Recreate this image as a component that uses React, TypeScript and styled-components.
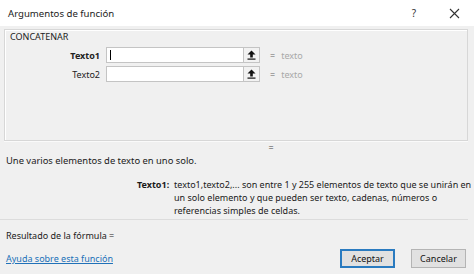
import React from "react";
import styled, { createGlobalStyle } from "styled-components";

const Global = createGlobalStyle`
  html, body { margin: 0; padding: 0; background: #f0f0f0; }
  body { font-family: "Noto Sans", "Open Sans", sans-serif; }
`;

const Dialog = styled.div`
  width: 474px;
  height: 274px;
  background: #f0f0f0;
  display: flex;
  flex-direction: column;
  overflow: hidden;
  color: #1a1a1a;
  font-size: 9px;
  & > * {
    flex-shrink: 0;
  }
`;

const TitleBar = styled.div`
  height: 26px;
  background: #fff;
  display: flex;
  align-items: center;
  padding-left: 8px;
  font-size: 9.6px;
  color: #222;
`;

const Title = styled.div`
  flex: 1;
`;

const TitleButton = styled.div`
  width: 40px;
  height: 26px;
  display: flex;
  align-items: center;
  justify-content: center;
  font-size: 10px;
  color: #333;
`;

const GroupBox = styled.div`
  margin: 3px 6px 0 4px;
  height: 112px;
  border: 1px solid #d7d7d7;
  box-shadow: inset 1px 1px 0 #fff, 0 1px 0 #fafafa;
  box-sizing: border-box;
  padding-top: 1px;
`;

const Legend = styled.div`
  padding-left: 5px;
  line-height: 12px;
  color: #222;
`;

const ArgList = styled.div`
  display: flex;
  flex-direction: column;
  gap: 3px;
  margin-top: 4px;
`;

const ArgRow = styled.div`
  display: grid;
  grid-template-columns: 95px 154px auto auto;
  justify-content: start;
  align-items: center;
  column-gap: 6px;
  height: 16px;
`;

const ArgLabel = styled.div<{ $bold?: boolean }>`
  text-align: right;
  font-weight: ${(p) => (p.$bold ? 700 : 400)};
  color: #222;
`;

const InputBox = styled.div`
  height: 16px;
  box-sizing: border-box;
  border: 1px solid #c4c4c4;
  background: #fff;
  display: flex;
  align-items: stretch;
`;

const InputField = styled.div`
  flex: 1;
  position: relative;
`;

const Caret = styled.span`
  position: absolute;
  left: 3px;
  top: 2px;
  width: 1px;
  height: 10px;
  background: #000;
`;

const CollapseButton = styled.div`
  width: 15px;
  border-left: 1px solid #c4c4c4;
  background: #f2f2f2;
  display: flex;
  align-items: center;
  justify-content: center;
`;

const Equals = styled.div`
  margin-left: 4px;
  color: #666;
`;

const Value = styled.div`
  color: #a8a8a8;
`;

const ResultEq = styled.div`
  width: 474px;
  text-align: center;
  padding-left: 68px;
  box-sizing: border-box;
  line-height: 12px;
  margin-top: 1px;
  color: #444;
`;

const Summary = styled.div`
  padding-left: 6px;
  font-size: 9.4px;
  line-height: 12px;
  margin-top: 1px;
`;

const Detail = styled.div`
  display: flex;
  margin-top: 11px;
  padding-left: 137px;
  line-height: 13px;
`;

const DetailLabel = styled.div`
  font-weight: 700;
  width: 37px;
  flex: none;
`;

const DetailText = styled.div`
  white-space: nowrap;
`;

const ResultSection = styled.div`
  margin-top: 2px;
  margin-right: 6px;
  border-top: 1px solid #dcdcdc;
  padding: 10px 0 0 6px;
  line-height: 12px;
`;

const Footer = styled.div`
  display: flex;
  align-items: center;
  padding: 0 8px 0 6px;
  margin-top: 7px;
`;

const HelpLink = styled.a`
  flex: 1;
  color: #2071b8;
  text-decoration: underline;
`;

const Button = styled.div<{ $primary?: boolean }>`
  width: 55px;
  height: 19px;
  box-sizing: border-box;
  display: flex;
  align-items: center;
  justify-content: center;
  background: #e1e1e1;
  border: 1px solid ${(p) => (p.$primary ? "#2a7bc0" : "#b4b4b4")};
  box-shadow: ${(p) => (p.$primary ? "inset 0 0 0 1px #2a7bc0" : "none")};
  color: #111;
  & + & {
    margin-left: 16px;
  }
`;

const CollapseIcon = () => (
  <svg width="9" height="10" viewBox="0 0 9 10">
    <path d="M4.5 0.5 L8.5 4.5 H5.8 V7.5 H3.2 V4.5 H0.5 Z" fill="#111" />
    <rect x="0.5" y="8.5" width="8" height="1.2" fill="#111" />
  </svg>
);

const CloseIcon = () => (
  <svg width="11" height="11" viewBox="0 0 11 11">
    <path d="M1 1 L10 10 M10 1 L1 10" stroke="#333" strokeWidth="1.1" />
  </svg>
);

const args = [
  { name: "Texto1", bold: true, caret: true },
  { name: "Texto2", bold: false, caret: false },
];

export default function App() {
  return (
    <Dialog>
      <Global />
      <TitleBar>
        <Title>Argumentos de función</Title>
        <TitleButton>?</TitleButton>
        <TitleButton>
          <CloseIcon />
        </TitleButton>
      </TitleBar>
      <GroupBox>
        <Legend>CONCATENAR</Legend>
        <ArgList>
          {args.map((a) => (
            <ArgRow key={a.name}>
              <ArgLabel $bold={a.bold}>{a.name}</ArgLabel>
              <InputBox>
                <InputField>{a.caret && <Caret />}</InputField>
                <CollapseButton>
                  <CollapseIcon />
                </CollapseButton>
              </InputBox>
              <Equals>=</Equals>
              <Value>texto</Value>
            </ArgRow>
          ))}
        </ArgList>
      </GroupBox>
      <ResultEq>=</ResultEq>
      <Summary>Une varios elementos de texto en uno solo.</Summary>
      <Detail>
        <DetailLabel>Texto1:</DetailLabel>
        <DetailText>
          texto1,texto2,... son entre 1 y 255 elementos de texto que se unirán en
          <br />
          un solo elemento y que pueden ser texto, cadenas, números o
          <br />
          referencias simples de celdas.
        </DetailText>
      </Detail>
      <ResultSection>Resultado de la fórmula =</ResultSection>
      <Footer>
        <HelpLink>Ayuda sobre esta función</HelpLink>
        <Button $primary>Aceptar</Button>
        <Button>Cancelar</Button>
      </Footer>
    </Dialog>
  );
}
